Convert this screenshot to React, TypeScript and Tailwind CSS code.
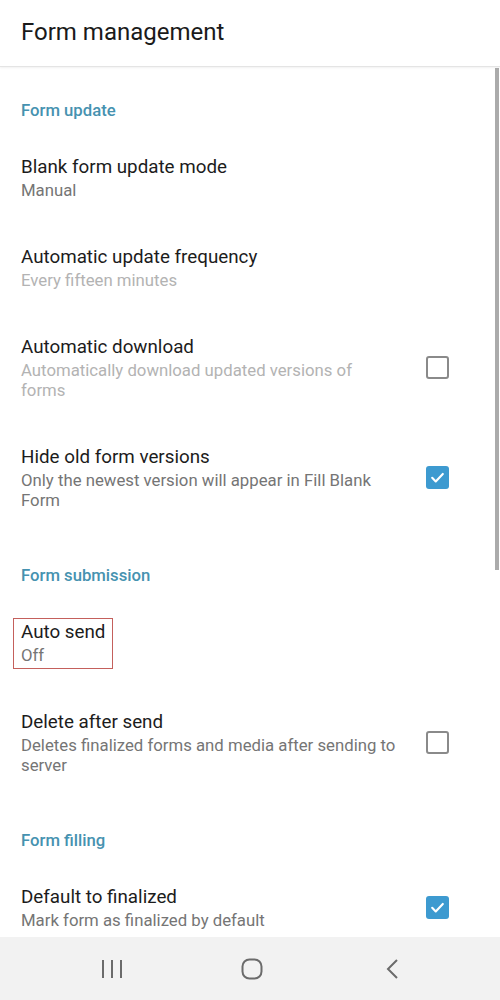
import React from "react";

type Pref = {
  title: string;
  summary?: string;
  muted?: boolean;
  check?: "on" | "off";
  highlight?: boolean;
};

type Section = { name: string; items: Pref[] };

const sections: Section[] = [
  {
    name: "Form update",
    items: [
      { title: "Blank form update mode", summary: "Manual" },
      { title: "Automatic update frequency", summary: "Every fifteen minutes", muted: true },
      {
        title: "Automatic download",
        summary: "Automatically download updated versions of forms",
        muted: true,
        check: "off",
      },
      {
        title: "Hide old form versions",
        summary: "Only the newest version will appear in Fill Blank Form",
        check: "on",
      },
    ],
  },
  {
    name: "Form submission",
    items: [
      { title: "Auto send", summary: "Off", highlight: true },
      {
        title: "Delete after send",
        summary: "Deletes finalized forms and media after sending to server",
        check: "off",
      },
    ],
  },
  {
    name: "Form filling",
    items: [
      { title: "Default to finalized", summary: "Mark form as finalized by default", check: "on" },
    ],
  },
];

const Checkbox = ({ on }: { on: boolean }) =>
  on ? (
    <div className="w-[23px] h-[23px] rounded-[3px] bg-[#3d9ad0] flex items-center justify-center">
      <svg width="17" height="17" viewBox="0 0 24 24" fill="none">
        <path d="M4.5 12.5l5 5L19.5 7" stroke="white" strokeWidth="3" strokeLinecap="round" strokeLinejoin="round" />
      </svg>
    </div>
  ) : (
    <div className="w-[23px] h-[23px] rounded-[3px] border-[2.5px] border-[#8a8a8a]" />
  );

const Row = ({ item }: { item: Pref }) => (
  <div className="flex items-center px-[21px] py-[22px]">
    <div className="relative w-[377px]">
      {item.highlight && (
        <div className="absolute -left-[8px] -top-[1px] w-[100px] h-[51px] border border-[#c4605c]" />
      )}
      <div className="text-[18.8px] leading-[26px] text-[#1c1c1c]">{item.title}</div>
      {item.summary && (
        <div className={`text-[16.75px] leading-[20px] ${item.muted ? "text-[#b3b3b3]" : "text-[#757575]"}`}>
          {item.summary}
        </div>
      )}
    </div>
    {item.check && (
      <div className="ml-auto mr-[30px]">
        <Checkbox on={item.check === "on"} />
      </div>
    )}
  </div>
);

export default function App() {
  return (
    <div
      className="relative w-[500px] h-[1000px] bg-white flex flex-col overflow-hidden"
      style={{ fontFamily: "Roboto, 'Noto Sans', sans-serif" }}
    >
      <div className="h-[67px] shrink-0 flex items-center px-[21px] border-b border-[#e4e4e4] shadow-[0_1px_2px_rgba(0,0,0,0.06)] z-10">
        <h1 className="text-[24px] text-[#1a1a1a] -mt-[3px]">Form management</h1>
      </div>

      <div className="flex-1 overflow-hidden">
        {sections.map((s) => (
          <div key={s.name}>
            <div className="pt-[34px] pb-[11px] px-[21px] text-[16.7px] leading-[20px] font-medium text-[#4692b0]">
              {s.name}
            </div>
            {s.items.map((it) => (
              <Row key={it.title} item={it} />
            ))}
          </div>
        ))}
      </div>

      {/* scrollbar thumb */}
      <div className="absolute right-[1px] top-[68px] w-[4px] h-[502px] bg-[#ababab]" />

      <div className="h-[63px] shrink-0 bg-[#f2f2f2] flex items-center justify-center pl-[4px]">
        <div className="w-[140px] flex justify-center">
          <svg width="22" height="20" viewBox="0 0 22 20">
            <path d="M2 1v18M11 1v18M20 1v18" stroke="#6b6b6b" strokeWidth="2" />
          </svg>
        </div>
        <div className="w-[140px] flex justify-center">
          <svg width="22" height="22" viewBox="0 0 22 22">
            <rect x="1.5" y="1.5" width="19" height="19" rx="7" fill="none" stroke="#6b6b6b" strokeWidth="2" />
          </svg>
        </div>
        <div className="w-[140px] flex justify-center">
          <svg width="13" height="22" viewBox="0 0 13 22">
            <path d="M11 2L2 11l9 9" fill="none" stroke="#6b6b6b" strokeWidth="2" />
          </svg>
        </div>
      </div>
    </div>
  );
}
